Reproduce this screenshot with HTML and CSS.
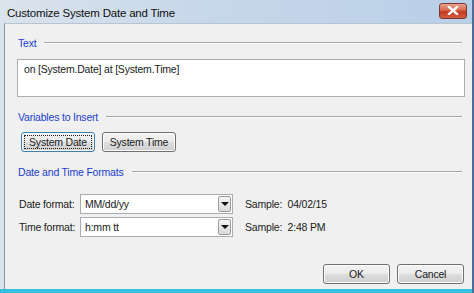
FILE: index.html
```html
<!DOCTYPE html>
<html lang="en">
<head>
    <meta charset="UTF-8">
    <title>Customize System Date and Time</title>
    <link rel="stylesheet" href="styles.css">
</head>
<body>
    <div class="window">
        <div class="titlebar">
            <span class="title">Customize System Date and Time</span>
            <span class="close">
                <svg width="12" height="9" viewBox="0 0 12 9">
                    <path d="M2 1 L10 8 M10 1 L2 8" stroke="#fff" stroke-width="2.4" stroke-linecap="square"/>
                </svg>
            </span>
        </div>

        <div class="client">
            <div class="group-label"><span>Text</span><i></i></div>
            <div class="textbox">on [System.Date] at [System.Time]</div>

            <div class="group-label spaced"><span>Variables to Insert</span><i></i></div>
            <div class="button-row">
                <button class="btn focused"><span>System Date</span></button>
                <button class="btn">System Time</button>
            </div>

            <div class="group-label spaced"><span>Date and Time Formats</span><i></i></div>
            <div class="format-row first">
                <label>Date format:</label>
                <div class="combo"><span>MM/dd/yy</span><b></b></div>
                <span class="sample">Sample:&nbsp; 04/02/15</span>
            </div>
            <div class="format-row">
                <label>Time format:</label>
                <div class="combo"><span>h:mm tt</span><b></b></div>
                <span class="sample">Sample:&nbsp; 2:48 PM</span>
            </div>

            <div class="footer">
                <button class="btn wide">OK</button>
                <button class="btn wide">Cancel</button>
            </div>
        </div>
        <div class="strip"></div>
    </div>
</body>
</html>
```

FILE: styles.css
```css
* {
    margin: 0;
    padding: 0;
    box-sizing: border-box;
}

body {
    font-family: "Liberation Sans", Arial, sans-serif;
    font-size: 10.5px;
    letter-spacing: -0.2px;
    color: #1b1b1b;
    width: 474px;
    height: 293px;
    overflow: hidden;
    background: #dce6f1;
}

.window {
    height: 293px;
    display: flex;
    flex-direction: column;
    background: linear-gradient(to right, #dbe3ec 0%, #c8d8ea 40%, #b9cfe8 100%);
    border-right: 2px solid #4a6e94;
}

.titlebar {
    height: 23px;
    display: flex;
    align-items: center;
    padding: 2px 5px 0 7px;
}

.title {
    font-size: 11.5px;
    color: #111;
    flex: 1;
}

.close {
    width: 28px;
    height: 16px;
    margin-top: -4px;
    border: 1px solid #7a3a30;
    border-radius: 3px;
    background: linear-gradient(to bottom, #e8a493 0%, #d7654d 45%, #c2391f 55%, #d05c3e 100%);
    display: flex;
    align-items: center;
    justify-content: center;
}

.client {
    flex: 1;
    margin: 0 0 0 4px;
    background: #f0f0f0;
    border-left: 1px solid #8894a2;
    border-top: 1px solid #b8c4d2;
    padding: 12px 7px 5px 12px;
    display: flex;
    flex-direction: column;
}

.group-label {
    display: flex;
    align-items: center;
    height: 13px;
    padding-left: 1px;
    margin-right: 3px;
    color: #1c3fd0;
}

.group-label i {
    flex: 1;
    height: 2px;
    margin-left: 8px;
    border-top: 1px solid #a6a6a6;
    border-bottom: 1px solid #fcfcfc;
}

.group-label.spaced {
    margin-top: 13px;
}

.textbox {
    margin-top: 10px;
    height: 38px;
    background: #fff;
    border: 1px solid #a9acb2;
    padding: 3px 6px;
}

.button-row {
    display: flex;
    gap: 7px;
    margin-top: 9px;
    padding-left: 4px;
}

.btn {
    font-family: inherit;
    font-size: 10.5px;
    letter-spacing: -0.2px;
    color: #1b1b1b;
    height: 20px;
    width: 74px;
    border: 1px solid #707070;
    border-radius: 3px;
    background: linear-gradient(to bottom, #f3f3f3 0%, #ebebeb 48%, #dddddd 52%, #cfcfcf 100%);
    box-shadow: inset 0 0 0 1px #fbfbfb;
}

.btn.focused {
    border-color: #3c7fb1;
    padding: 2px;
}

.btn.focused span {
    display: block;
    height: 100%;
    border: 1px dotted #222;
    line-height: 12px;
}

.format-row {
    display: flex;
    align-items: center;
    margin-top: 3px;
    padding-left: 2px;
    white-space: nowrap;
}

.format-row.first {
    margin-top: 16px;
}

.format-row label {
    width: 61px;
    flex-shrink: 0;
}

.combo {
    width: 153px;
    height: 20px;
    flex-shrink: 0;
    background: #fff;
    border: 1px solid #a9acb2;
    display: flex;
    align-items: center;
    padding-left: 4px;
}

.combo span {
    flex: 1;
}

.combo b {
    width: 13px;
    height: 16px;
    margin-right: 1px;
    border: 1px solid #9c9c9c;
    border-radius: 2px;
    background: linear-gradient(to bottom, #f4f4f4, #dadada);
    position: relative;
}

.combo b::after {
    content: "";
    position: absolute;
    left: 2px;
    top: 5px;
    border-left: 4px solid transparent;
    border-right: 4px solid transparent;
    border-top: 4px solid #111;
}

.sample {
    margin-left: 12px;
}

.footer {
    margin-top: auto;
    display: flex;
    justify-content: flex-end;
    gap: 7px;
    padding-right: 1px;
}

.btn.wide {
    width: 67px;
}

.strip {
    height: 4px;
    background: #36bfe0;
}
```
